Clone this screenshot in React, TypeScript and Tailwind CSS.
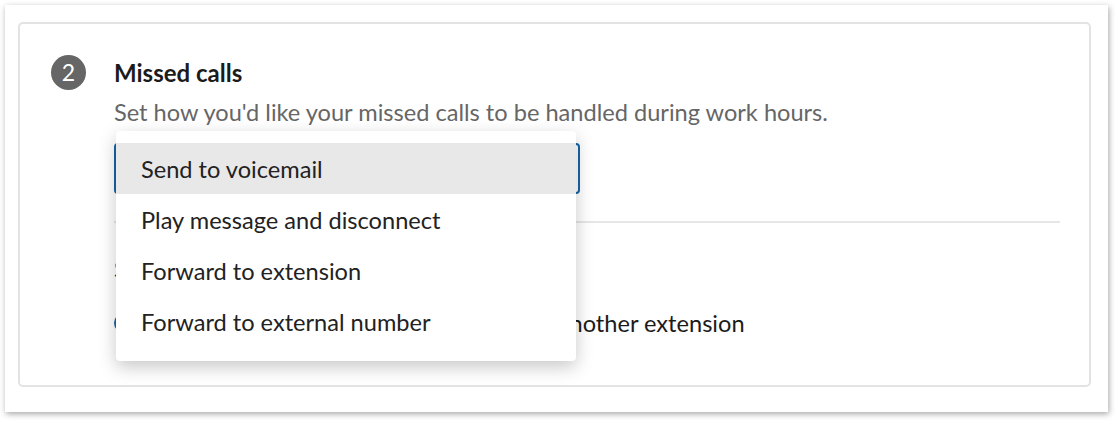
import React from 'react';

const options = [
  'Send to voicemail',
  'Play message and disconnect',
  'Forward to extension',
  'Forward to external number',
];

const MissedCallsCard = () => {
  return (
    <div className="min-h-[422px] bg-white pt-[5px] pl-[5px] font-['Lato','Open_Sans',sans-serif]">
      <div className="w-[1103px] h-[407px] bg-white shadow-[1px_2px_6px_rgba(0,0,0,0.35)] pt-[17px] pl-[13px]">
        <div className="w-[1073px] h-[365px] rounded-[5px] border-2 border-[#e3e3e3] pt-[31px] pl-[31px] pr-[29px] flex items-start">
          {/* step badge */}
          <div className="w-[35px] h-[35px] shrink-0 rounded-full bg-[#666666] text-white text-[23px] leading-none flex items-center justify-center">
            2
          </div>

          <div className="ml-[28px] flex-1 flex flex-col">
            <div className="h-[35px] flex items-center">
              <h3 className="text-[24px] leading-[28px] font-bold text-[#1b1b1b]">Missed calls</h3>
            </div>
            <p className="mt-[8px] text-[23.6px] leading-[28px] text-[#666666]">
              Set how you'd like your missed calls to be handled during work hours.
            </p>

            {/* select with open menu */}
            <div className="relative mt-[17px] w-[466px]">
              <div className="h-[51px] rounded-[4px] border-2 border-[#1565a7] bg-white flex items-center pl-[25px] text-[23.6px] text-[#222]">
                Send to voicemail
              </div>

              <div className="absolute left-[2px] top-[-12px] z-10 w-[460px] rounded-[4px] bg-white shadow-[0_6px_18px_rgba(0,0,0,0.22)] pt-[12px] pb-[14px]">
                {options.map((opt, i) => (
                  <div
                    key={opt}
                    className={`h-[51px] flex items-center pl-[25px] pt-[2px] text-[23.6px] text-[#222] ${i === 0 ? 'bg-[#e8e8e8]' : ''}`}
                  >
                    {opt}
                  </div>
                ))}
              </div>
            </div>

            <div className="mt-[27px] h-[2px] bg-[#e6e6e6]" />

            <div className="mt-[32px] text-[23.6px] leading-[28px] text-[#1b1b1b]">
              Select where missed calls should go
            </div>

            <label className="mt-[26px] flex items-center">
              <span className="w-[20px] h-[20px] rounded-full border-[6px] border-[#1565a7] bg-white shrink-0" />
              <span className="ml-[12px] text-[23.6px] leading-[28px] text-[#1b1b1b]">
                Send unanswered calls automatically to another extension
              </span>
            </label>
          </div>
        </div>
      </div>
    </div>
  );
};

export default function App() {
  return <MissedCallsCard />;
}
